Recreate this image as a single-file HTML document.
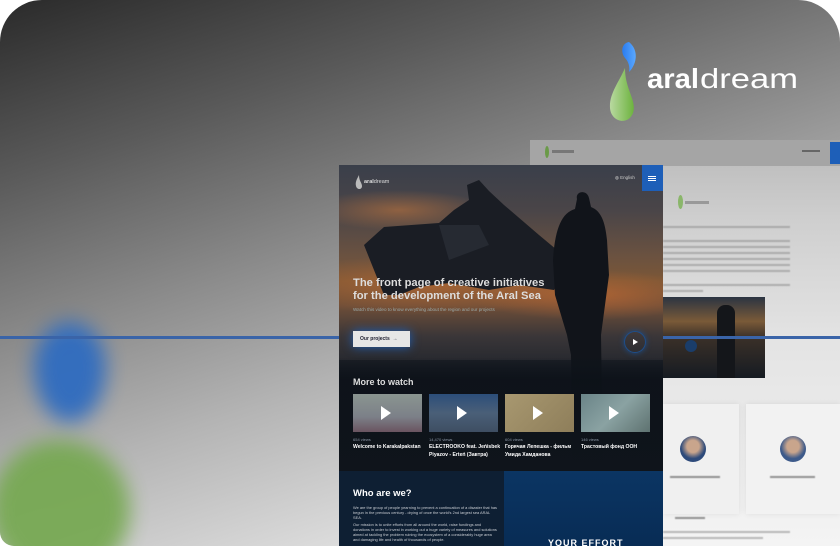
<!DOCTYPE html>
<html><head><meta charset="utf-8"><style>
*{margin:0;padding:0;box-sizing:border-box}
html,body{width:840px;height:546px;background:#fff;overflow:hidden;font-family:"Liberation Sans",sans-serif}
#bg{position:absolute;left:0;top:0;width:840px;height:546px;border-radius:42px 42px 0 14px;overflow:hidden;
background:linear-gradient(162deg,#2a2a2a 0%,#5a5a5a 22%,#8a8a8a 42%,#b4b4b4 60%,#dcdcdc 80%,#f2f2f2 100%)}
.blob{position:absolute;filter:blur(10px)}
.abs{position:absolute}
.rp{position:absolute;left:530px;top:140px;width:310px;height:406px;background:linear-gradient(180deg,#b9b9b9 0%,#cfcfcf 20%,#e4e4e4 50%,#f4f4f4 100%)}
.rt{position:absolute;height:2px;background:#8a8a8a;opacity:.55;filter:blur(.6px)}
.phone{position:absolute;left:339px;top:165px;width:324px;height:381px;overflow:hidden;background:#0d1520}
.hero{position:absolute;left:0;top:0;width:324px;height:306px;overflow:hidden;
background:
radial-gradient(ellipse 90px 20px at 60px 45px,rgba(200,120,60,.55),transparent),
radial-gradient(ellipse 120px 25px at 250px 130px,rgba(210,110,50,.6),transparent),
radial-gradient(ellipse 160px 30px at 90px 120px,rgba(200,110,50,.55),transparent),
linear-gradient(180deg,#3a3f4a 0%,#4a4548 15%,#6b5240 30%,#7c5736 38%,#6e4e38 46%,#3a3638 56%,#1e232b 68%,#161c24 100%)}
.wt{color:#fff}
.thumb{position:absolute;top:229px;width:69px;height:38px}
.play{position:absolute;left:28px;top:12px;width:0;height:0;border-left:10px solid #fff;border-top:7px solid transparent;border-bottom:7px solid transparent}
.vv{position:absolute;top:272px;font-size:4px;color:#8a96a4}
.vt{position:absolute;top:279px;font-size:5.1px;font-weight:bold;color:#fff;line-height:7.5px;width:76px}
</style></head><body>
<div id="bg">
  <div class="blob" style="left:34px;top:322px;width:72px;height:100px;border-radius:50% 50% 50% 50%/45% 45% 55% 55%;background:#2f6cc0;opacity:.95"></div>
  <div class="blob" style="left:-10px;top:440px;width:140px;height:140px;border-radius:50%;background:#74a84e;opacity:.9"></div>

  <div class="rp">
    <div class="abs" style="left:0;top:0;width:310px;height:26px;background:#a5a5a5"></div>
    <div class="abs" style="left:300px;top:2px;width:10px;height:22px;background:#1e5fb8"></div>
    <div class="abs" style="left:15px;top:6px;width:4px;height:12px;background:#6a9a48;border-radius:50%"></div>
    <div class="abs" style="left:22px;top:10px;width:22px;height:3px;background:#777"></div>
    <div class="abs" style="left:272px;top:10px;width:18px;height:2px;background:#666"></div>
    <div class="abs" style="left:148px;top:55px;width:5px;height:14px;background:#8ab66a;border-radius:50%"></div>
    <div class="abs" style="left:155px;top:61px;width:24px;height:3px;background:#999"></div>
    <div class="rt" style="left:133px;top:86px;width:127px"></div>
    <div class="rt" style="left:133px;top:100px;width:127px"></div>
    <div class="rt" style="left:133px;top:106px;width:127px"></div>
    <div class="rt" style="left:133px;top:112px;width:127px"></div>
    <div class="rt" style="left:133px;top:118px;width:127px"></div>
    <div class="rt" style="left:133px;top:124px;width:127px"></div>
    <div class="rt" style="left:133px;top:130px;width:127px"></div>
    <div class="rt" style="left:133px;top:144px;width:127px"></div>
    <div class="rt" style="left:133px;top:150px;width:40px"></div>
    <div class="abs" style="left:133px;top:157px;width:102px;height:81px;background:linear-gradient(180deg,#2b3442 0%,#7a5a38 30%,#3a3028 50%,#161b22 100%)"></div>
    <div class="abs" style="left:187px;top:165px;width:18px;height:73px;background:#14161a;border-radius:8px 8px 0 0"></div>
    <div class="abs" style="left:155px;top:200px;width:12px;height:12px;border-radius:50%;background:#1a3d6a"></div>
    <div class="abs" style="left:133px;top:264px;width:76px;height:110px;background:#f0f0f0;box-shadow:0 0 6px rgba(0,0,0,.08)"></div>
    <div class="abs" style="left:216px;top:264px;width:94px;height:110px;background:#f2f2f2;box-shadow:0 0 6px rgba(0,0,0,.08)"></div>
    <div class="abs" style="left:150px;top:296px;width:26px;height:26px;border-radius:50%;background:radial-gradient(circle at 50% 40%,#c9a58c 30%,#2d4a7a 60%)"></div>
    <div class="abs" style="left:250px;top:296px;width:26px;height:26px;border-radius:50%;background:radial-gradient(circle at 50% 40%,#c9a58c 30%,#3d5a8a 60%)"></div>
    <div class="rt" style="left:140px;top:336px;width:50px;background:#444"></div>
    <div class="rt" style="left:240px;top:336px;width:45px;background:#444"></div>
    <div class="rt" style="left:145px;top:377px;width:30px;background:#444"></div>
    <div class="rt" style="left:133px;top:391px;width:127px"></div>
    <div class="rt" style="left:133px;top:397px;width:100px"></div>
  </div>
  <div class="abs" style="left:0;top:336px;width:840px;height:3px;background:#3a64a8"></div>

  <!-- big logo -->
  <svg class="abs" style="left:606px;top:40px" width="200" height="86" viewBox="0 0 200 86">
    <defs><linearGradient id="g" x1="0" x2="1"><stop offset="0" stop-color="#b9d9a0"/><stop offset="1" stop-color="#6db33f"/></linearGradient>
    <linearGradient id="b" x1="0" x2="1"><stop offset="0" stop-color="#2a7cf0"/><stop offset="1" stop-color="#5aa8ff"/></linearGradient></defs>
    <path d="M23 2 C16 3 14 12 19 18 C23 22 24 28 23 32 C31 24 33 10 23 2Z" fill="url(#b)"/>
    <path d="M19 28 C13 42 3 54 4 68 C5 82 22 86 27 73 C31 60 19 50 19 28Z" fill="url(#g)"/>
    <text x="41" y="48" font-family="Liberation Sans" font-weight="bold" font-size="28" fill="#fff" textLength="52" lengthAdjust="spacingAndGlyphs">aral</text>
    <text x="94" y="48" font-family="Liberation Sans" font-size="28" fill="#fff" textLength="98" lengthAdjust="spacingAndGlyphs">dream</text>
  </svg>

  <div class="phone">
    <div class="hero">
      <svg class="abs" style="left:0;top:0" width="324" height="306" viewBox="0 0 324 306">
        <path d="M25 80 L45 62 L100 58 L115 45 L130 35 L128 20 L140 15 L150 26 L165 40 L200 70 L218 85 L225 110 L215 125 L180 120 L150 125 L110 118 L80 122 L60 130 L45 130 L35 105 Z" fill="#1a1d24"/>
        <path d="M100 60 L140 60 L150 80 L110 95 Z" fill="#262a32"/>
        <path d="M238 34 C236 26 248 24 250 33 L252 42 C262 46 266 56 268 75 L270 110 L266 140 L262 170 L264 306 L234 306 L232 190 L228 170 L216 130 L214 95 C216 65 222 48 236 44 Z" fill="#11141a"/>
        <rect x="0" y="195" width="324" height="111" fill="#10161e" opacity=".55"/>
      </svg>
      <svg class="abs" style="left:14px;top:8px" width="40" height="18" viewBox="0 0 40 18"><path d="M6 2 C4 6 2 9 3 13 C4 17 9 17 9 13 C9 10 6 8 6 2Z" fill="#bbb"/><text x="11" y="10" font-size="5.5" fill="#ddd" font-family="Liberation Sans" font-weight="bold">aral<tspan font-weight="normal">dream</tspan></text></svg>
      <div class="abs" style="left:276px;top:10px;font-size:4.5px;color:#ccc">◍ English</div>
      <div class="abs" style="left:303px;top:0;width:21px;height:26px;background:#1e5fb8"></div>
      <div class="abs" style="left:309px;top:11px;width:8px;height:1px;background:#fff;box-shadow:0 2px 0 #fff,0 4px 0 #fff"></div>
      <div class="abs wt" style="left:14px;top:112px;font-size:11.2px;font-weight:bold;line-height:13px;color:#ddd">The front page of creative initiatives<br>for the development of the Aral Sea</div>
      <div class="abs" style="left:14px;top:142px;font-size:4.6px;color:#9aa">Watch this video to know everything about the region and our projects</div>
      <div class="abs" style="left:14px;top:166px;width:57px;height:16px;background:#e6e6e6;box-shadow:0 0 10px #1d5fb8;font-size:5px;font-weight:bold;color:#223;padding:5px 0 0 7px">Our projects &nbsp;→</div>
      <div class="abs" style="left:285px;top:166px;width:22px;height:22px;border-radius:50%;border:1px solid #1e4e8a;box-shadow:0 0 6px #1e4e8a"></div>
      <div class="abs" style="left:294px;top:174px;border-left:5px solid #fff;border-top:3px solid transparent;border-bottom:3px solid transparent"></div>
    </div>
    <div class="abs" style="left:0;top:192px;width:324px;height:114px;background:linear-gradient(180deg,rgba(15,22,32,.0),rgba(12,17,24,.85) 20%,#0f141b)"></div>
    <div class="abs wt" style="left:14px;top:212px;font-size:9px;font-weight:bold;color:#ddd">More to watch</div>
    <div class="thumb" style="left:14px;background:linear-gradient(180deg,#8a9590,#7c8088 60%,#6a5460)"><div class="play"></div></div>
    <div class="thumb" style="left:90px;background:linear-gradient(180deg,#2c4e7a,#4a5f78 50%,#3e4e62)"><div class="play"></div></div>
    <div class="thumb" style="left:166px;background:linear-gradient(135deg,#a89870,#8e7e5a)"><div class="play"></div></div>
    <div class="thumb" style="left:242px;background:linear-gradient(135deg,#6a8488,#8aa2a2 50%,#5e7270)"><div class="play"></div></div>
    <div class="vv" style="left:14px">654 views</div><div class="vv" style="left:90px">14,470 views</div><div class="vv" style="left:166px">604 views</div><div class="vv" style="left:242px">146 views</div>
    <div class="vt" style="left:14px">Welcome to Karakalpakstan</div>
    <div class="vt" style="left:90px">ELECTROOKO feat. Jeńisbek Piyazov - Erteń (Завтра)</div>
    <div class="vt" style="left:166px">Горячая Лепешка - фильм Умида Хамданова</div>
    <div class="vt" style="left:242px">Трастовый фонд ООН</div>
    <div class="abs" style="left:0;top:306px;width:165px;height:75px;background:#0e1f33"></div>
    <div class="abs" style="left:165px;top:306px;width:159px;height:75px;background:linear-gradient(180deg,#0b3563,#082c55)"></div>
    <div class="abs wt" style="left:14px;top:323px;font-size:9.5px;font-weight:bold">Who are we?</div>
    <div class="abs" style="left:14px;top:340px;width:145px;height:38px;overflow:hidden;font-size:3.9px;line-height:5px;color:#c8ccd2">We are the group of people yearning to prevent a continuation of a disaster that has begun in the previous century - drying of once the world's 2nd largest sea ARAL SEA.<br><span style="display:block;margin-top:2px">Our mission is to unite efforts from all around the world, raise fundings and donations in order to invest in working out a huge variety of measures and solutions aimed at tackling the problem ruining the ecosystem of a considerably huge area and damaging life and health of thousands of people.</span></div>
    <div class="abs wt" style="left:209px;top:374px;font-size:9px;font-weight:bold;letter-spacing:1px;line-height:9px">YOUR EFFORT</div>
  </div>
</div>
</body></html>
